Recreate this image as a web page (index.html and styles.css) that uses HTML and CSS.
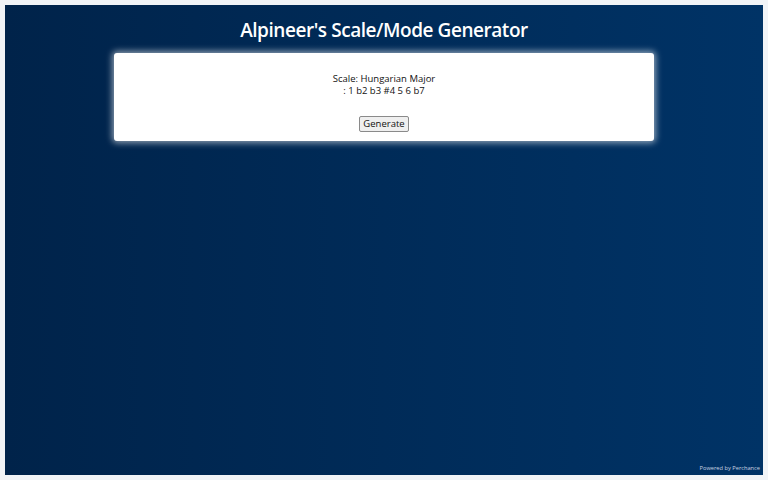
FILE: index.html
```html
<!DOCTYPE html>
<html>
<head>
<meta charset="utf-8">
<link rel="stylesheet" href="styles.css">
</head>
<body>
<div class="page">
  <h1 class="title">Alpineer's Scale/Mode Generator</h1>
  <div class="card">
    <div class="output">Scale: Hungarian Major<br>: 1 b2 b3 #4 5 6 b7</div>
    <button class="btn">Generate</button>
  </div>
  <div class="spacer"></div>
  <div class="footer">Powered by Perchance</div>
</div>
</body>
</html>
```
FILE: styles.css
```css
html, body {
  margin: 0;
  padding: 0;
  height: 100%;
}
body {
  background: #f1f4f7;
  padding: 5px;
  box-sizing: border-box;
  font-family: "Open Sans", "DejaVu Sans", sans-serif;
}
.page {
  height: 100%;
  background: linear-gradient(to right, #00234a 0%, #002b58 50%, #003366 100%);
  display: flex;
  flex-direction: column;
  align-items: center;
  box-sizing: border-box;
}
.title {
  margin: 0;
  padding-top: 12px;
  height: 36px;
  line-height: 26px;
  color: #ffffff;
  font-size: 19px;
  font-weight: 600;
  letter-spacing: -0.45px;
  box-sizing: content-box;
}
.card {
  margin-top: 0;
  width: 540px;
  height: 88px;
  background: #ffffff;
  border-radius: 3px;
  box-shadow: 0 0 6px 2px rgba(255,255,255,0.55);
  display: flex;
  flex-direction: column;
  align-items: center;
  box-sizing: border-box;
  padding-top: 20px;
}
.output {
  color: #111;
  font-size: 9.5px;
  line-height: 12px;
  text-align: center;
}
.btn {
  margin-top: 19px;
  width: 50px;
  height: 16px;
  padding: 0;
  font-family: "Open Sans", "DejaVu Sans", sans-serif;
  font-size: 9.5px;
  color: #111;
  background: #efefef;
  border: 1px solid #8a8a8a;
  border-radius: 2px;
  line-height: 14px;
}
.spacer {
  flex: 1;
}
.footer {
  align-self: flex-end;
  color: #c8d2e0;
  font-size: 5.7px;
  padding: 0 3px 3px 0;
  line-height: 8px;
}
```
